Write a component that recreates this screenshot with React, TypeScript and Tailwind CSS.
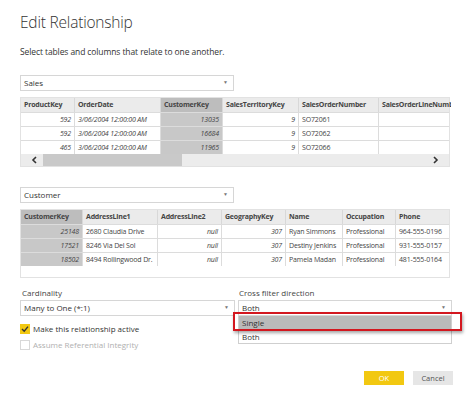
import React from "react";

type Col = { name: string; w: number; hl?: boolean };
type CellV = { v: string; italic?: boolean; right?: boolean };

const salesCols: Col[] = [
  { name: "ProductKey", w: 54 },
  { name: "OrderDate", w: 86 },
  { name: "CustomerKey", w: 62, hl: true },
  { name: "SalesTerritoryKey", w: 76 },
  { name: "SalesOrderNumber", w: 80 },
  { name: "SalesOrderLineNumber", w: 72 },
];

const salesRows: CellV[][] = [
  ["592", "3/06/2004 12:00:00 AM", "13035", "9", "SO72061", ""],
  ["592", "3/06/2004 12:00:00 AM", "16684", "9", "SO72062", ""],
  ["465", "3/06/2004 12:00:00 AM", "11965", "9", "SO72066", ""],
].map((r) => [
  { v: r[0], italic: true, right: true },
  { v: r[1], italic: true },
  { v: r[2], italic: true, right: true },
  { v: r[3], italic: true, right: true },
  { v: r[4] },
  { v: r[5] },
]);

const custCols: Col[] = [
  { name: "CustomerKey", w: 62, hl: true },
  { name: "AddressLine1", w: 75 },
  { name: "AddressLine2", w: 64 },
  { name: "GeographyKey", w: 64 },
  { name: "Name", w: 57 },
  { name: "Occupation", w: 53 },
  { name: "Phone", w: 55 },
];

const custRows: CellV[][] = [
  ["25148", "2680 Claudia Drive", "Ryan Simmons", "964-555-0196"],
  ["17521", "8246 Via Del Sol", "Destiny Jenkins", "931-555-0157"],
  ["18502", "8494 Rollingwood Dr.", "Pamela Madan", "481-555-0164"],
].map((r) => [
  { v: r[0], italic: true, right: true },
  { v: r[1] },
  { v: "null", italic: true, right: true },
  { v: "307", italic: true, right: true },
  { v: r[2] },
  { v: "Professional" },
  { v: r[3] },
]);

function Dropdown({ value }: { value: string }) {
  return (
    <div className="h-[16px] border border-[#d6d6d6] bg-white flex items-center justify-between pl-[3px] pr-[5px] text-[8px] text-[#333]">
      <span>{value}</span>
      <span className="text-[5px] text-[#777]">▼</span>
    </div>
  );
}

function Table({ cols, rows }: { cols: Col[]; rows: CellV[][] }) {
  return (
    <>
      <div className="flex h-[14px] bg-[#ebebeb]">
        {cols.map((c, i) => (
          <div
            key={c.name}
            style={{ width: c.w }}
            className={`shrink-0 overflow-hidden whitespace-nowrap px-[3px] text-[7px] tracking-[-0.2px] font-bold leading-[14px] text-[#444] ${
              c.hl ? "bg-[#bdbdbd]" : ""
            } ${i < cols.length - 1 ? "border-r border-[#d8d8d8]" : ""}`}
          >
            {c.name}
          </div>
        ))}
      </div>
      {rows.map((r, ri) => (
        <div key={ri} className="flex h-[14px] border-t border-[#dcdcdc]">
          {r.map((cell, i) => (
            <div
              key={i}
              style={{ width: cols[i].w }}
              className={`shrink-0 overflow-hidden whitespace-nowrap px-[3px] text-[7px] tracking-[-0.15px] leading-[13px] text-[#444] ${
                cell.italic ? "italic" : ""
              } ${cell.right ? "text-right" : ""} ${
                cols[i].hl ? "bg-[#c8c8c8]" : ""
              } ${i < r.length - 1 ? "border-r border-[#dcdcdc]" : ""}`}
            >
              {cell.v}
            </div>
          ))}
        </div>
      ))}
    </>
  );
}

function Chevron({ dir }: { dir: "l" | "r" }) {
  return (
    <svg width="7" height="8" viewBox="0 0 7 8" className="shrink-0">
      <path
        d={dir === "l" ? "M5 1 L2 4 L5 7" : "M2 1 L5 4 L2 7"}
        fill="none"
        stroke="#333"
        strokeWidth="1.6"
      />
    </svg>
  );
}

export default function App() {
  return (
    <div className="w-[474px] h-[404px] bg-white px-[20px] pt-[11px] font-['Open_Sans','Liberation_Sans',sans-serif] text-[#333] relative overflow-hidden">
      <h1 className="text-[15.5px] font-light leading-[22px] text-[#333] tracking-[-0.2px]">
        Edit Relationship
      </h1>
      <p className="mt-[13px] text-[8.5px] leading-[12px] text-[#333] tracking-[-0.1px]">
        Select tables and columns that relate to one another.
      </p>

      {/* Sales */}
      <div className="mt-[17px] w-[214px]">
        <Dropdown value="Sales" />
      </div>
      <div className="mt-[6px] w-[430px] border border-[#e2e2e2]">
        <Table cols={salesCols} rows={salesRows} />
        <div className="flex items-center h-[12px] bg-[#ececec]">
          <div className="w-[22px] flex justify-center pl-[4px]">
            <Chevron dir="l" />
          </div>
          <div className="w-[139px] h-full bg-[#c9c9c9]" />
          <div className="flex-1" />
          <div className="w-[22px] flex justify-center pr-[6px]">
            <Chevron dir="r" />
          </div>
        </div>
      </div>

      {/* Customer */}
      <div className="mt-[20px] w-[214px]">
        <Dropdown value="Customer" />
      </div>
      <div className="mt-[6px] w-[430px] h-[69px] border border-[#e2e2e2]">
        <Table cols={custCols} rows={custRows} />
      </div>

      {/* Options */}
      <div className="mt-[8px] flex gap-[3px]">
        <div className="w-[215px]">
          <div className="text-[8px] leading-[14px] pl-[2px] text-[#444]">Cardinality</div>
          <Dropdown value="Many to One (*:1)" />
          <div className="mt-[7px] flex items-center gap-[3px] h-[12px]">
            <div className="w-[10px] h-[10px] bg-[#f2c811] flex items-center justify-center">
              <svg width="8" height="8" viewBox="0 0 8 8">
                <path d="M1 4 L3.2 6.2 L7 1.6" fill="none" stroke="#333" strokeWidth="1.4" />
              </svg>
            </div>
            <span className="text-[8px] text-[#333]">Make this relationship active</span>
          </div>
          <div className="mt-[4px] flex items-center gap-[3px] h-[12px]">
            <div className="w-[10px] h-[10px] border border-[#d8d8d8] bg-white" />
            <span className="text-[8px] text-[#b0b0b0]">Assume Referential Integrity</span>
          </div>
        </div>
        <div className="w-[214px] relative">
          <div className="text-[8px] leading-[14px] pl-[1px] text-[#444]">Cross filter direction</div>
          <Dropdown value="Both" />
          <div className="absolute left-0 top-[30px] w-[214px] border border-[#cfcfcf] border-t-0 bg-white text-[8px] text-[#333]">
            <div className="h-[14px] leading-[14px] pl-[3px] bg-[#bababa]">Single</div>
            <div className="h-[13px] leading-[13px] pl-[3px]">Both</div>
          </div>
          <div className="absolute left-[-5px] top-[26px] w-[229px] h-[19px] border-2 border-[#d3171f] shadow-[1px_2px_3px_rgba(0,0,0,0.35)]" />
        </div>
      </div>

      {/* Buttons */}
      <div className="absolute left-[364px] top-[371px] flex gap-[9px]">
        <button className="w-[40px] h-[14px] bg-[#f2c811] text-[7.5px] text-white leading-[14px]">OK</button>
        <button className="w-[40px] h-[14px] bg-[#e6e6e6] text-[7.5px] text-[#555] leading-[14px]">Cancel</button>
      </div>
    </div>
  );
}
